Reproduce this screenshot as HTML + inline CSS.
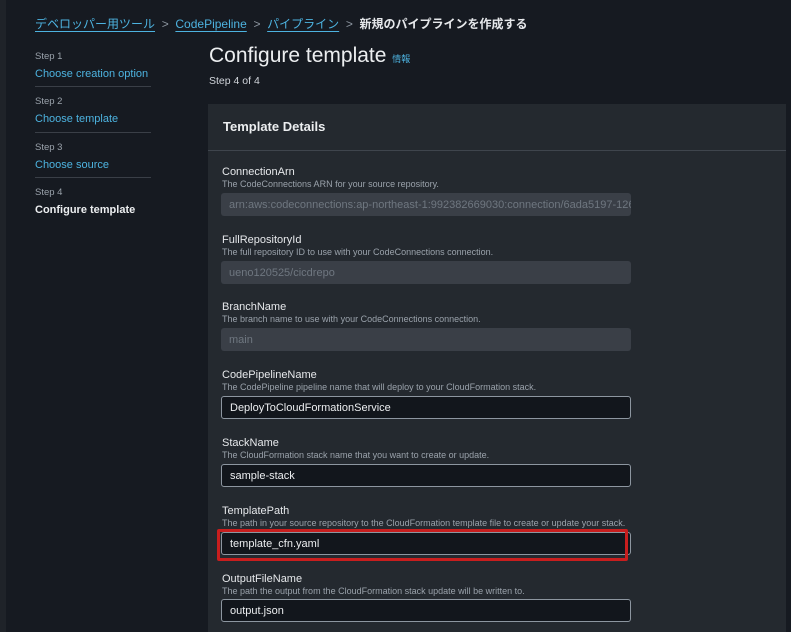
<!DOCTYPE html>
<html><head><meta charset="utf-8"><style>
*{margin:0;padding:0;box-sizing:border-box}
html,body{width:791px;height:632px;overflow:hidden}
body{background:#161a21;font-family:"Liberation Sans","Noto Sans CJK JP",sans-serif;color:#d1d5db;position:relative}
.edge{position:absolute;left:0;top:0;width:6px;height:632px;background:#1f2329}
.a{position:absolute;white-space:nowrap}
.bc{top:15px;font-size:12px;color:#4db3e0}
.bc u{text-decoration:underline;text-underline-offset:3px}
.sep{color:#8d96a0}
.step{font-size:9.5px;color:#9aa2ab}
.lnk{font-size:11px;color:#4db3e0}
.div{position:absolute;left:35px;width:116px;height:1px;background:#3a3f47}
.panel{position:absolute;left:208px;top:104px;width:578px;height:528px;background:#24292f;overflow:hidden}
.ph{position:absolute;left:0;top:46px;width:578px;height:1px;background:#3f454d}
.lab{font-size:11px;color:#e6e8eb}
.desc{font-size:9px;color:#9aa2ab}
.in{position:absolute;left:13px;width:410px;height:23px;border-radius:3px;font-size:11px;padding-left:8px;line-height:24px;white-space:nowrap;overflow:hidden}
.dis{background:#3a3f47;color:#6f7780}
.en{background:#12161c;border:1px solid #8d96a0;color:#eceef0;line-height:22px}
</style></head><body>
<div class="edge"></div>
<div class="a bc" style="left:35px"><u>デベロッパー用ツール</u> <span class="sep">&nbsp;&gt;&nbsp;</span> <u>CodePipeline</u> <span class="sep">&nbsp;&gt;&nbsp;</span> <u>パイプライン</u> <span class="sep">&nbsp;&gt;&nbsp;</span> <span style="color:#e6e8eb;font-weight:bold">新規のパイプラインを作成する</span></div>

<div class="a step" style="left:35px;top:51px">Step 1</div>
<div class="a lnk" style="left:35px;top:68px">Choose creation option</div>
<div class="div" style="top:86px"></div>
<div class="a step" style="left:35px;top:96px">Step 2</div>
<div class="a lnk" style="left:35px;top:113px">Choose template</div>
<div class="div" style="top:132px"></div>
<div class="a step" style="left:35px;top:142px">Step 3</div>
<div class="a lnk" style="left:35px;top:159px">Choose source</div>
<div class="div" style="top:177px"></div>
<div class="a step" style="left:35px;top:187px">Step 4</div>
<div class="a lnk" style="left:35px;top:204px;color:#eceef0;font-weight:bold">Configure template</div>

<div class="a" style="left:209px;top:44px;font-size:21px;color:#eceef0">Configure template <span style="font-size:9px;color:#4db3e0">情報</span></div>
<div class="a" style="left:209px;top:75px;font-size:10.5px;color:#d1d5db">Step 4 of 4</div>

<div class="panel">
<div class="ph"></div>
<div class="a" style="left:15px;top:15px;font-size:13px;font-weight:bold;color:#eceef0">Template Details</div>

<div class="a lab" style="left:14px;top:62px">ConnectionArn</div>
<div class="a desc" style="left:14px;top:75px">The CodeConnections ARN for your source repository.</div>
<div class="in dis" style="top:89px">arn:aws:codeconnections:ap-northeast-1:992382669030:connection/6ada5197-1268-</div>

<div class="a lab" style="left:14px;top:130px">FullRepositoryId</div>
<div class="a desc" style="left:14px;top:143px">The full repository ID to use with your CodeConnections connection.</div>
<div class="in dis" style="top:157px">ueno120525/cicdrepo</div>

<div class="a lab" style="left:14px;top:197px">BranchName</div>
<div class="a desc" style="left:14px;top:210px">The branch name to use with your CodeConnections connection.</div>
<div class="in dis" style="top:224px">main</div>

<div class="a lab" style="left:14px;top:265px">CodePipelineName</div>
<div class="a desc" style="left:14px;top:278px">The CodePipeline pipeline name that will deploy to your CloudFormation stack.</div>
<div class="in en" style="top:292px">DeployToCloudFormationService</div>

<div class="a lab" style="left:14px;top:333px">StackName</div>
<div class="a desc" style="left:14px;top:346px">The CloudFormation stack name that you want to create or update.</div>
<div class="in en" style="top:360px">sample-stack</div>

<div class="a lab" style="left:14px;top:401px">TemplatePath</div>
<div class="a desc" style="left:14px;top:414px">The path in your source repository to the CloudFormation template file to create or update your stack.</div>
<div class="in en" style="top:428px">template_cfn.yaml</div>
<div style="position:absolute;left:9px;top:425px;width:411px;height:32px;border:3px solid #c81e1e;border-radius:2px"></div>

<div class="a lab" style="left:14px;top:469px">OutputFileName</div>
<div class="a desc" style="left:14px;top:482px">The path the output from the CloudFormation stack update will be written to.</div>
<div class="in en" style="top:495px">output.json</div>
</div>
</body></html>
